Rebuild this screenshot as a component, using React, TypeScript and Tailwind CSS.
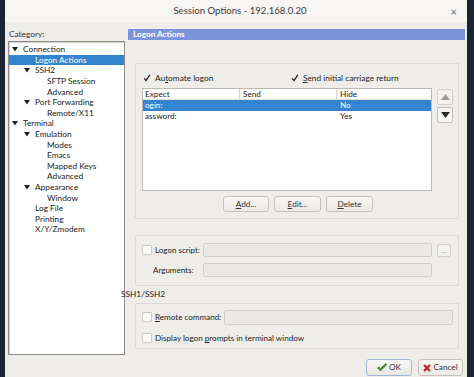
import React from 'react';

const FONT = "font-['Lato','Noto_Sans',sans-serif]";

type Node = { label: string; level: number; arrow?: boolean; selected?: boolean };

const TREE: Node[] = [
  { label: 'Connection', level: 0, arrow: true },
  { label: 'Logon Actions', level: 1, selected: true },
  { label: 'SSH2', level: 1, arrow: true },
  { label: 'SFTP Session', level: 2 },
  { label: 'Advanced', level: 2 },
  { label: 'Port Forwarding', level: 1, arrow: true },
  { label: 'Remote/X11', level: 2 },
  { label: 'Terminal', level: 0, arrow: true },
  { label: 'Emulation', level: 1, arrow: true },
  { label: 'Modes', level: 2 },
  { label: 'Emacs', level: 2 },
  { label: 'Mapped Keys', level: 2 },
  { label: 'Advanced', level: 2 },
  { label: 'Appearance', level: 1, arrow: true },
  { label: 'Window', level: 2 },
  { label: 'Log File', level: 1 },
  { label: 'Printing', level: 1 },
  { label: 'X/Y/Zmodem', level: 1 },
];

const INDENT = ['pl-[3px]', 'pl-[15px]', 'pl-[27px]'];

function Check({ checked }: { checked?: boolean }) {
  return (
    <span
      className={`w-[10px] h-[10px] border rounded-[1px] flex items-center justify-center shrink-0 ${
        checked ? 'border-transparent' : 'border-[#cdc9c3] bg-[#fbfbfa]'
      }`}
    >
      {checked && (
        <svg width="8" height="8" viewBox="0 0 8 8">
          <path d="M1.2 4.4 L3 6.6 L6.8 0.8" fill="none" stroke="#222" strokeWidth="1.3" />
        </svg>
      )}
    </span>
  );
}

function Btn({ children, w }: { children: React.ReactNode; w: string }) {
  return (
    <div
      className={`${w} h-[16px] flex items-center justify-center gap-[2px] rounded-[3px] border border-[#c4c0ba] bg-gradient-to-b from-[#f8f7f6] to-[#ebe9e5] text-[8.2px] text-[#333]`}
    >
      {children}
    </div>
  );
}

function Field({ w }: { w: string }) {
  return <div className={`${w} h-[14px] shrink-0 rounded-[2px] border border-[#d2cec9] bg-[#ebe9e6]`} />;
}

export default function App() {
  return (
    <div className={`w-[474px] h-[377px] flex bg-[#1b2531] overflow-hidden ${FONT}`}>
      <div className="w-[5px]" />
      <div className="w-[462px] flex flex-col bg-[#efede9]">
        {/* title bar */}
        <div className="h-[22px] bg-[#f7f6f5] flex items-center relative text-[9.6px] text-[#3a3a3a]">
          <div className="flex-1 text-center pl-[8px]">Session Options - 192.168.0.20</div>
          <div className="absolute right-[10px] top-[4px] text-[11px] text-[#666]">×</div>
        </div>

        <div className="flex-1 flex pl-[3px] pt-[7px]">
          {/* left column */}
          <div className="w-[117px] flex flex-col">
            <div className="h-[12px] text-[8.3px] leading-[11px] text-[#333] pl-[1px]">Category:</div>
            <div className="w-[117px] h-[314px] bg-white border border-[#8f8c88] pt-[2px] shadow-[inset_1px_1px_0_#d6d3cf]">
              {TREE.map((n, i) => (
                <div
                  key={i}
                  className={`h-[10.6px] flex items-center text-[8.3px] leading-[10px] whitespace-nowrap ${INDENT[n.level]} ${
                    n.selected ? 'bg-[#3484d0] text-white' : 'text-[#222]'
                  }`}
                >
                  <span className="w-[11px] flex items-center shrink-0">
                    {n.arrow && (
                      <svg width="6" height="5" viewBox="0 0 6 5">
                        <path d="M0 0 H6 L3 4.5 Z" fill="#222" />
                      </svg>
                    )}
                  </span>
                  <span>{n.label}</span>
                </div>
              ))}
            </div>
          </div>

          {/* right column */}
          <div className="w-[337px] ml-[3px] flex flex-col">
            <div className="h-[11px] bg-[#7b94db] text-white font-bold text-[8.2px] leading-[11px] pl-[5px]">
              Logon Actions
            </div>

            <div className="ml-[7px] w-[324px] flex flex-col">
              {/* group 1 */}
              <div className="mt-[23px] h-[156px] border border-[#dcd9d4] rounded-[2px] flex flex-col pl-[6px] pt-[8px]">
                <div className="h-[12px] flex items-center text-[8.3px] text-[#222] whitespace-nowrap">
                  <div className="w-[148px] flex items-center gap-[3px]">
                    <Check checked />
                    <span>
                      Au<span className="underline">t</span>omate logon
                    </span>
                  </div>
                  <div className="flex items-center gap-[3px]">
                    <Check checked />
                    <span>
                      <span className="underline">S</span>end initial carriage return
                    </span>
                  </div>
                </div>

                <div className="mt-[4px] flex gap-[5px]">
                  <div className="w-[290px] h-[103px] bg-white border border-[#bdb9b3] text-[8.2px] text-[#222]">
                    <div className="h-[11px] flex border-b border-[#e2dfdb] leading-[10px]">
                      <div className="w-[97px] pl-[2px] border-r border-[#d6d3ce]">Expect</div>
                      <div className="w-[97px] pl-[3px] border-r border-[#d6d3ce]">Send</div>
                      <div className="flex-1 pl-[3px]">Hide</div>
                    </div>
                    <div className="h-[10.5px] flex bg-[#3484d0] text-white leading-[10px]">
                      <div className="w-[97px] pl-[2px]">ogin:</div>
                      <div className="w-[97px]" />
                      <div className="flex-1 pl-[3px]">No</div>
                    </div>
                    <div className="h-[10.5px] flex leading-[10px]">
                      <div className="w-[97px] pl-[2px]">assword:</div>
                      <div className="w-[97px]" />
                      <div className="flex-1 pl-[3px]">Yes</div>
                    </div>
                  </div>
                  <div className="flex flex-col gap-[2px] pt-[1px]">
                    <div className="w-[16px] h-[16px] rounded-[2px] border border-[#d3d0cb] bg-[#f2f1ef] flex items-center justify-center">
                      <svg width="9" height="6" viewBox="0 0 9 6">
                        <path d="M0 6 L4.5 0 L9 6 Z" fill="#9a9895" />
                      </svg>
                    </div>
                    <div className="w-[16px] h-[16px] rounded-[2px] border border-[#c4c0ba] bg-[#f6f5f3] flex items-center justify-center">
                      <svg width="9" height="6" viewBox="0 0 9 6">
                        <path d="M0 0 H9 L4.5 6 Z" fill="#2a2a2a" />
                      </svg>
                    </div>
                  </div>
                </div>

                <div className="mt-[5px] flex gap-[5px] pl-[81px]">
                  <Btn w="w-[46px]">
                    <span>
                      <span className="underline">A</span>dd...
                    </span>
                  </Btn>
                  <Btn w="w-[47px]">
                    <span>
                      <span className="underline">E</span>dit...
                    </span>
                  </Btn>
                  <Btn w="w-[47px]">
                    <span>
                      <span className="underline">D</span>elete
                    </span>
                  </Btn>
                </div>
              </div>

              {/* group 2 */}
              <div className="mt-[16px] h-[51px] border border-[#dcd9d4] rounded-[2px] flex flex-col pl-[6px] pt-[7px] text-[8px] text-[#222] whitespace-nowrap">
                <div className="flex items-center h-[14px]">
                  <div className="w-[61px] shrink-0 flex items-center gap-[3px]">
                    <Check />
                    <span>Logon script:</span>
                  </div>
                  <Field w="w-[229px]" />
                  <div className="ml-[5px] w-[14px] h-[13px] rounded-[2px] border border-[#d3d0cb] bg-[#f2f1ef] text-[7px] text-[#999] flex items-center justify-center leading-none">
                    ...
                  </div>
                </div>
                <div className="flex items-center h-[14px] mt-[6px]">
                  <div className="w-[61px] shrink-0 pl-[11px]">Arguments:</div>
                  <Field w="w-[229px]" />
                </div>
              </div>

              <div className="h-[17px] flex items-center text-[8.3px] text-[#222] ml-[-14px]">SSH1/SSH2</div>

              {/* group 3 */}
              <div className="h-[46px] border border-[#dcd9d4] rounded-[2px] flex flex-col pl-[6px] pt-[6px] text-[8.1px] text-[#222] whitespace-nowrap">
                <div className="flex items-center h-[15px]">
                  <div className="w-[82px] shrink-0 flex items-center gap-[3px]">
                    <Check />
                    <span>
                      <span className="underline">R</span>emote command:
                    </span>
                  </div>
                  <Field w="w-[229px] h-[15px]" />
                </div>
                <div className="flex items-center gap-[3px] mt-[7px]">
                  <Check />
                  <span>
                    Display logon <span className="underline">p</span>rompts in terminal window
                  </span>
                </div>
              </div>
            </div>

            <div className="mt-[10px] flex justify-end gap-[6px] pr-[2px]">
              <div className="w-[46px] h-[17px] flex items-center justify-center gap-[1px] rounded-[3px] border border-[#9fb7d6] bg-gradient-to-b from-[#f8f7f6] to-[#e9e7e3] text-[8.2px] text-[#333]">
                <svg width="11" height="9" viewBox="0 0 11 9">
                  <path d="M0.5 5 L3.5 8 L10 1.5 L8.5 0.5 L3.5 5.5 L2 3.8 Z" fill="#4c8c3a" stroke="#2e5e23" strokeWidth="0.5" />
                </svg>
                <span>OK</span>
              </div>
              <div className="w-[45px] h-[17px] flex items-center justify-center gap-[2px] rounded-[3px] border border-[#c4c0ba] bg-gradient-to-b from-[#f8f7f6] to-[#ebe9e5] text-[8.2px] text-[#333]">
                <svg width="8" height="8" viewBox="0 0 8 8">
                  <path d="M1 1 L7 7 M7 1 L1 7" stroke="#c0261d" strokeWidth="2.2" />
                </svg>
                <span>Cancel</span>
              </div>
            </div>
          </div>
        </div>
      </div>
      <div className="w-[7px]" />
    </div>
  );
}
